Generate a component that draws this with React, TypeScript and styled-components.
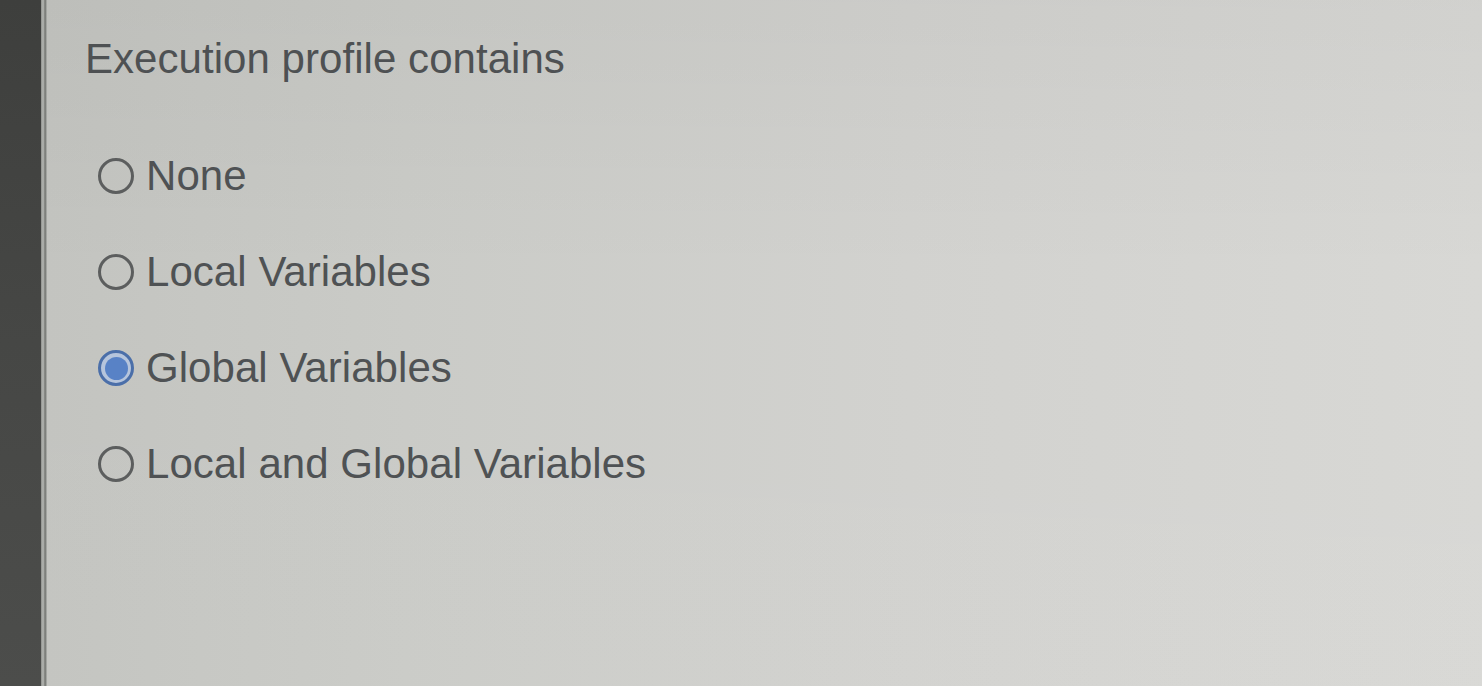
import React, { useState } from "react";
import styled, { createGlobalStyle } from "styled-components";

const Global = createGlobalStyle`
  html, body { margin: 0; padding: 0; }
  body { font-family: "Liberation Sans", Arial, sans-serif; }
`;

const Screen = styled.div`
  display: flex;
  width: 1482px;
  height: 686px;
  overflow: hidden;
`;

const SideBar = styled.div`
  width: 41px;
  flex: none;
  background: linear-gradient(180deg, #3e3f3d 0%, #464745 50%, #4c4d4b 100%);
`;

const Divider = styled.div`
  width: 6px;
  flex: none;
  background: linear-gradient(90deg, #8e908c 0px, #b4b6b2 2px, #9fa19d 3px, #6f716d 4px, #8c8e8a 5px, #b9bbb7 6px);
`;

const Panel = styled.main`
  flex: 1;
  padding: 35px 0 0 38px;
  background:
    linear-gradient(180deg, rgba(0, 0, 0, 0.03) 0%, rgba(0, 0, 0, 0) 40%, rgba(255, 255, 255, 0.02) 100%),
    linear-gradient(90deg, #c3c4c0 0%, #cacbc7 25%, #d2d2cf 60%, #d8d8d5 100%);
`;

const Title = styled.h2`
  margin: 0 0 45px 0;
  font-size: 42px;
  line-height: 48px;
  font-weight: 400;
  color: #4e5153;
  letter-spacing: 0.05px;
`;

const Options = styled.div`
  display: flex;
  flex-direction: column;
  padding-left: 13px;
`;

const Row = styled.label`
  display: flex;
  align-items: center;
  height: 96px;
  gap: 12px;
  cursor: pointer;
`;

const Circle = styled.span<{ $checked: boolean }>`
  width: 36px;
  height: 36px;
  box-sizing: border-box;
  border-radius: 50%;
  flex: none;
  display: flex;
  align-items: center;
  justify-content: center;
  border: 3px solid ${(p) => (p.$checked ? "#4b6fa9" : "#5c5e5e")};
  background: ${(p) => (p.$checked ? "#b6c5dc" : "transparent")};
  &::after {
    content: "";
    display: ${(p) => (p.$checked ? "block" : "none")};
    width: 23px;
    height: 23px;
    border-radius: 50%;
    background: #5882c6;
  }
`;

const Label = styled.span`
  font-size: 42px;
  line-height: 48px;
  color: #4f5254;
  letter-spacing: 0.05px;
`;

const choices = ["None", "Local Variables", "Global Variables", "Local and Global Variables"];

export default function App() {
  const [value, setValue] = useState("Global Variables");
  return (
    <>
      <Global />
      <Screen>
        <SideBar />
        <Divider />
        <Panel>
          <Title>Execution profile contains</Title>
          <Options>
            {choices.map((c) => (
              <Row key={c} onClick={() => setValue(c)}>
                <Circle $checked={value === c} />
                <Label>{c}</Label>
              </Row>
            ))}
          </Options>
        </Panel>
      </Screen>
    </>
  );
}
